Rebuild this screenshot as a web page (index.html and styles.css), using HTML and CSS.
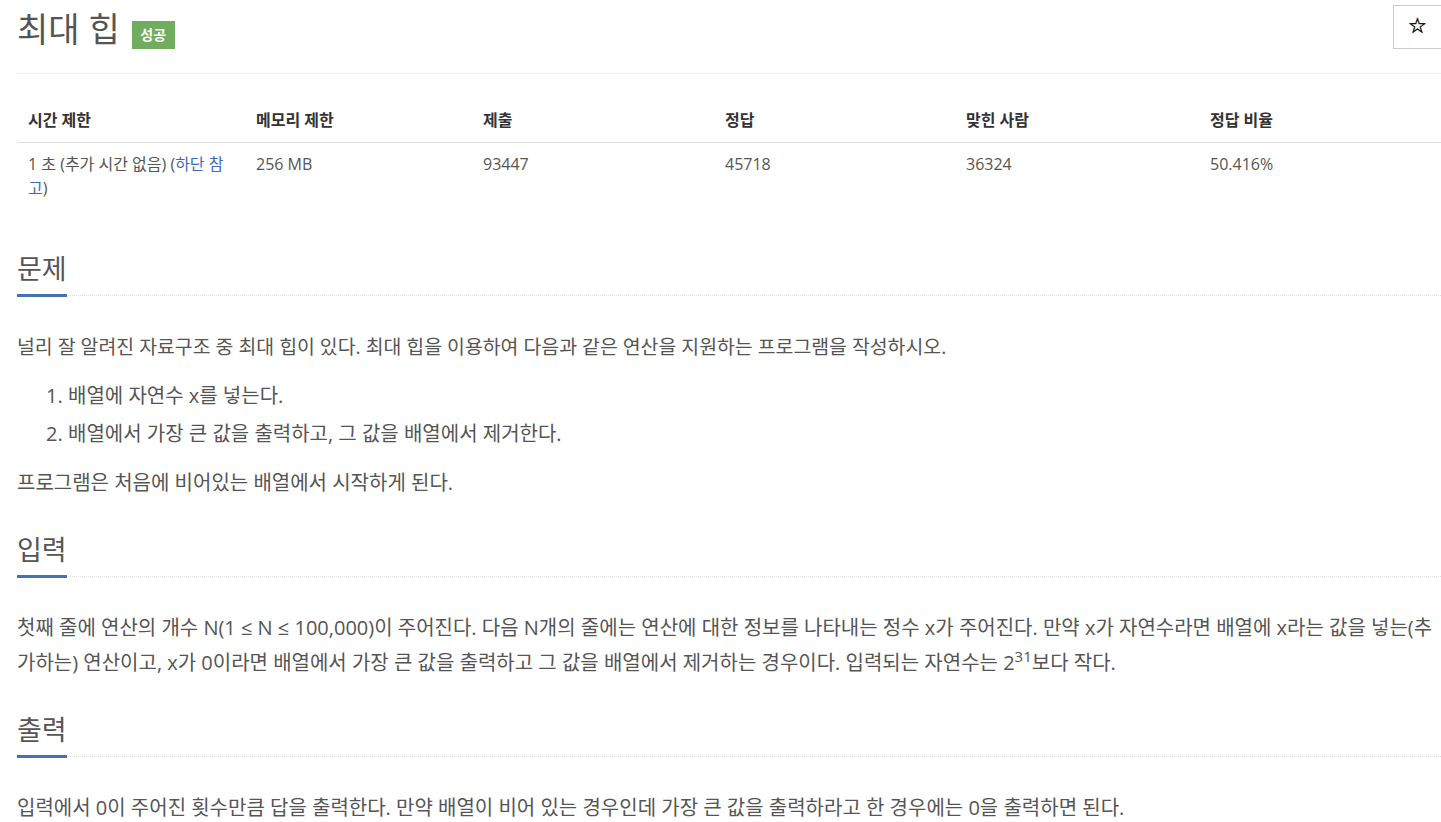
FILE: index.html
```html
<!DOCTYPE html>
<html lang="ko">
<head>
<meta charset="utf-8">
<title>최대 힙</title>
<link rel="stylesheet" href="styles.css">
</head>
<body>
<div class="page">
  <div class="title-row">
    <h1 class="title">최대 힙 <span class="badge">성공</span></h1>
    <button class="star-btn" type="button">☆</button>
  </div>

  <table class="info">
    <colgroup>
      <col class="c1"><col class="c2"><col class="c3"><col class="c4"><col class="c5"><col class="c6">
    </colgroup>
    <thead>
      <tr>
        <th class="first">시간 제한</th>
        <th>메모리 제한</th>
        <th>제출</th>
        <th>정답</th>
        <th>맞힌 사람</th>
        <th>정답 비율</th>
      </tr>
    </thead>
    <tbody>
      <tr>
        <td class="first">1 초 (추가 시간 없음) (<a href="#" class="link">하단 참고</a>)</td>
        <td>256 MB</td>
        <td>93447</td>
        <td>45718</td>
        <td>36324</td>
        <td>50.416%</td>
      </tr>
    </tbody>
  </table>

  <section class="section">
    <div class="headline"><h2>문제</h2></div>
    <div class="text">
      <p class="lead">널리 잘 알려진 자료구조 중 최대 힙이 있다. 최대 힙을 이용하여 다음과 같은 연산을 지원하는 프로그램을 작성하시오.</p>
      <ol>
        <li>배열에 자연수 x를 넣는다.</li>
        <li>배열에서 가장 큰 값을 출력하고, 그 값을 배열에서 제거한다.</li>
      </ol>
      <p>프로그램은 처음에 비어있는 배열에서 시작하게 된다.</p>
    </div>
  </section>

  <section class="section">
    <div class="headline"><h2>입력</h2></div>
    <div class="text">
      <p>첫째 줄에 연산의 개수 N(1 ≤ N ≤ 100,000)이 주어진다. 다음 N개의 줄에는 연산에 대한 정보를 나타내는 정수 x가 주어진다. 만약 x가 자연수라면 배열에 x라는 값을 넣는(추가하는) 연산이고, x가 0이라면 배열에서 가장 큰 값을 출력하고 그 값을 배열에서 제거하는 경우이다. 입력되는 자연수는 2<sup>31</sup>보다 작다.</p>
    </div>
  </section>

  <section class="section">
    <div class="headline"><h2>출력</h2></div>
    <div class="text">
      <p>입력에서 0이 주어진 횟수만큼 답을 출력한다. 만약 배열이 비어 있는 경우인데 가장 큰 값을 출력하라고 한 경우에는 0을 출력하면 된다.</p>
    </div>
  </section>
</div>
</body>
</html>
```

FILE: styles.css
```css
html, body {
  margin: 0;
  padding: 0;
  overflow: hidden;
  background: #fff;
}

body {
  font-family: "Open Sans", "Noto Sans CJK KR", sans-serif;
  color: #555;
  font-size: 16px;
}

.page {
  padding-left: 17px;
}

.title-row {
  display: flex;
  align-items: flex-start;
  justify-content: space-between;
  border-bottom: 1px solid #eee;
  height: 74px;
  box-sizing: border-box;
}

.title {
  margin: 0;
  padding-top: 6px;
  font-size: 34px;
  font-weight: 400;
  line-height: 46px;
  color: #555;
  display: flex;
  align-items: center;
}

.badge {
  display: inline-block;
  margin-left: 12px;
  margin-top: 12px;
  width: 43px;
  height: 28px;
  line-height: 28px;
  text-align: center;
  background: #70ad5e;
  color: #fff;
  font-size: 14px;
  font-weight: 600;
}

.star-btn {
  margin-top: 5px;
  margin-right: -6px;
  width: 54px;
  height: 44px;
  border: 1px solid #ccc;
  background: #fff;
  font-family: "DejaVu Sans", sans-serif;
  font-size: 21px;
  line-height: 40px;
  color: #000;
  text-align: left;
  padding: 0 0 2px 14px;
  -webkit-text-stroke: 0.4px #000;
}

.info {
  width: 1424px;
  border-collapse: collapse;
  margin-top: 24px;
  table-layout: fixed;
}

.c1 { width: 228px; }
.c2 { width: 227px; }
.c3 { width: 242px; }
.c4 { width: 241px; }
.c5 { width: 244px; }
.c6 { width: 242px; }

.info th {
  text-align: left;
  font-weight: 700;
  color: #333;
  font-size: 16px;
  line-height: 24px;
  padding: 10px 11px;
  border-bottom: 1px solid #ddd;
}

.info td {
  text-align: left;
  vertical-align: top;
  font-size: 16px;
  line-height: 24px;
  padding: 9px 11px;
}

.info td.first {
  padding-right: 8px;
}

.link {
  color: #3d6cb4;
  text-decoration: none;
}

.section {
  margin-top: 45px;
}

.section + .section {
  margin-top: 35px;
}

.headline {
  border-bottom: 1px dotted #ddd;
  margin-bottom: 33px;
}

.headline h2 {
  width: fit-content;
  margin: 0 0 -2px;
  font-size: 27px;
  font-weight: 400;
  line-height: 30px;
  padding-bottom: 10px;
  border-bottom: 3px solid #4372b6;
  color: #555;
}

.text {
  font-size: 20px;
  line-height: 35px;
}

.text .lead {
  font-size: 19.4px;
}

.text p {
  margin: 0 0 14px;
}

.text p:last-child {
  margin-bottom: 0;
}

.text ol {
  margin: 0 0 14px;
  padding-left: 51px;
}

.text li + li {
  margin-top: 3px;
}

.text sup {
  font-size: 75%;
  line-height: 0;
}
```
